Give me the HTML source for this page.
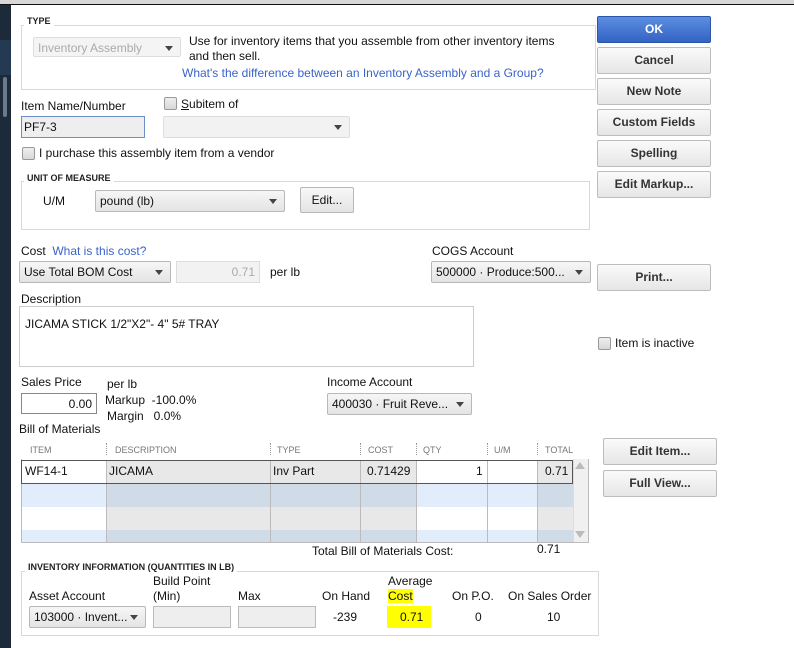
<!DOCTYPE html><html><head><style>
body{margin:0;width:794px;height:648px;background:#fff;position:relative;overflow:hidden;font-family:"Liberation Sans",sans-serif;font-size:12px;color:#111}
.a{position:absolute;white-space:nowrap}
.fs{position:absolute;border:1px solid #d8d8d8}
.lg{position:absolute;background:#fff;font-size:9px;font-weight:bold;padding:0 3px;color:#222}
.btn{position:absolute;left:597px;width:112px;height:25px;border:1px solid #bdbdbd;border-radius:2px;background:linear-gradient(#fafafa,#e6e6e6);font-weight:bold;text-align:center;line-height:25px;color:#333}
.dd{position:absolute;border:1px solid #b8b8b8;border-radius:2px;background:linear-gradient(#f6f6f6,#e4e4e4);line-height:20px;padding-left:4px;box-sizing:border-box;overflow:hidden}
.dd:after{content:"";position:absolute;right:7px;top:8px;border:4px solid transparent;border-top:5px solid #444}
.pb{position:absolute;border:1px solid #b8b8b8;border-radius:2px;background:linear-gradient(#f8f8f8,#e4e4e4);box-sizing:border-box;text-align:center}
.in{position:absolute;border:1px solid #aaa;background:#fff;box-sizing:border-box}
.cb{position:absolute;width:11px;height:11px;border:1px solid #999;border-radius:2px;background:linear-gradient(#eee,#d8d8d8)}
.lk{color:#3a63c8}
.hd{position:absolute;top:445px;font-size:9px;color:#777}
.sep{position:absolute;top:443px;height:12px;border-left:1px dotted #999}
</style></head><body>
<div class="a" style="left:0;top:0;width:794px;height:4px;background:#d8d8d8"></div>
<div class="a" style="left:0;top:4px;width:794px;height:1px;background:#111"></div>
<div class="a" style="left:0;top:5px;width:11px;height:643px;background:#1c2a39"></div>
<div class="a" style="left:0;top:40px;width:11px;height:35px;background:#243a52"></div>
<div class="a" style="left:3px;top:77px;width:4px;height:40px;background:#6b7a8a;border-radius:2px"></div>

<div class="fs" style="left:21px;top:25px;width:573px;height:63px"></div>
<div class="lg" style="left:24px;top:16px">TYPE</div>
<div class="dd" style="left:33px;top:37px;width:148px;height:20px;color:#aaa;border-color:#ddd;background:#f4f4f4">Inventory Assembly</div>
<div class="a" style="left:189px;top:34px">Use for inventory items that you assemble from other inventory items</div>
<div class="a" style="left:189px;top:49px">and then sell.</div>
<div class="a lk" style="left:182px;top:66px">What's the difference between an Inventory Assembly and a Group?</div>

<div class="btn" style="top:16px;background:linear-gradient(#5b8ee0,#3463c4);border-color:#2a55a8;color:#fff">OK</div>
<div class="btn" style="top:47px">Cancel</div>
<div class="btn" style="top:78px">New Note</div>
<div class="btn" style="top:109px">Custom Fields</div>
<div class="btn" style="top:140px">Spellin<u>g</u></div>
<div class="btn" style="top:171px">Edit Markup...</div>
<div class="btn" style="top:264px">Print...</div>
<div class="btn" style="top:438px;left:603px">Edit Item...</div>
<div class="btn" style="top:470px;left:603px">Full View...</div>

<div class="a" style="left:21px;top:99px">Item Name/Number</div>
<div class="in" style="left:21px;top:116px;width:124px;height:22px;border-color:#6b8fc9;background:#eee;padding:3px 2px">PF7-3</div>
<div class="cb" style="left:164px;top:97px"></div>
<div class="a" style="left:181px;top:97px"><u>S</u>ubitem of</div>
<div class="dd" style="left:163px;top:116px;width:187px;height:22px;border-color:#ddd;background:#f2f2f2"></div>
<div class="cb" style="left:22px;top:147px"></div>
<div class="a" style="left:39px;top:146px">I purchase this assembly item from a vendor</div>

<div class="fs" style="left:21px;top:181px;width:567px;height:47px"></div>
<div class="lg" style="left:24px;top:173px">UNIT OF MEASURE</div>
<div class="a" style="left:43px;top:194px">U/M</div>
<div class="dd" style="left:95px;top:190px;width:190px;height:22px">pound (lb)</div>
<div class="pb" style="left:300px;top:187px;width:54px;height:26px;line-height:24px">Edit...</div>

<div class="a" style="left:21px;top:244px">Cost&nbsp; <span class="lk">What is this cost?</span></div>
<div class="dd" style="left:19px;top:261px;width:152px;height:22px">Use Total BOM Cost</div>
<div class="in" style="left:176px;top:261px;width:84px;height:22px;border-color:#ddd;background:#f2f2f2;text-align:right;padding:3px 4px;color:#aaa">0.71</div>
<div class="a" style="left:270px;top:265px">per lb</div>
<div class="a" style="left:432px;top:244px">COGS Account</div>
<div class="dd" style="left:431px;top:261px;width:160px;height:22px">500000 · Produce:500...</div>

<div class="a" style="left:21px;top:292px">Description</div>
<div class="in" style="left:19px;top:306px;width:455px;height:61px;border-color:#ccc;padding:10px 5px">JICAMA STICK 1/2"X2"- 4" 5# TRAY</div>
<div class="cb" style="left:598px;top:337px"></div>
<div class="a" style="left:615px;top:336px">Item is inactive</div>

<div class="a" style="left:21px;top:375px">Sales Price</div>
<div class="in" style="left:21px;top:393px;width:76px;height:21px;border-color:#888;text-align:right;padding:3px 4px">0.00</div>
<div class="a" style="left:107px;top:377px">per lb</div>
<div class="a" style="left:105px;top:393px">Markup&nbsp; -100.0%</div>
<div class="a" style="left:107px;top:409px">Margin&nbsp;&nbsp; 0.0%</div>
<div class="a" style="left:327px;top:375px">Income Account</div>
<div class="dd" style="left:327px;top:393px;width:145px;height:22px">400030 · Fruit Reve...</div>
<div class="a" style="left:19px;top:422px">Bill of Materials</div>

<div class="hd" style="left:30px">ITEM</div><div class="sep" style="left:106px"></div>
<div class="hd" style="left:115px">DESCRIPTION</div><div class="sep" style="left:270px"></div>
<div class="hd" style="left:277px">TYPE</div><div class="sep" style="left:360px"></div>
<div class="hd" style="left:368px">COST</div><div class="sep" style="left:416px"></div>
<div class="hd" style="left:423px">QTY</div><div class="sep" style="left:487px"></div>
<div class="hd" style="left:494px">U/M</div><div class="sep" style="left:537px"></div>
<div class="hd" style="left:545px">TOTAL</div>

<div class="a" style="left:21px;top:459px;width:566px;height:83px;background:#fff;border:1px solid #bbb;border-top:none"></div>
<div class="a" style="left:22px;top:483px;width:551px;height:24px;background:#e2edfb"></div>
<div class="a" style="left:22px;top:530px;width:551px;height:12px;background:#e2edfb"></div>
<div class="a" style="left:106px;top:461px;width:431px;height:81px;background:#e8e8e8"></div>
<div class="a" style="left:106px;top:483px;width:431px;height:24px;background:#d0dbe8"></div>
<div class="a" style="left:106px;top:530px;width:431px;height:12px;background:#d0dbe8"></div>
<div class="a" style="left:416px;top:461px;width:121px;height:81px;background:#fff"></div>
<div class="a" style="left:416px;top:483px;width:121px;height:24px;background:#e2edfb"></div>
<div class="a" style="left:416px;top:530px;width:121px;height:12px;background:#e2edfb"></div>
<div class="a" style="left:537px;top:461px;width:36px;height:81px;background:#e8e8e8"></div>
<div class="a" style="left:537px;top:483px;width:36px;height:24px;background:#d0dbe8"></div>
<div class="a" style="left:537px;top:530px;width:36px;height:12px;background:#d0dbe8"></div>
<div class="a" style="left:106px;top:461px;width:0;height:81px;border-left:1px solid #bbb"></div>
<div class="a" style="left:270px;top:461px;width:0;height:81px;border-left:1px solid #bbb"></div>
<div class="a" style="left:360px;top:461px;width:0;height:81px;border-left:1px solid #bbb"></div>
<div class="a" style="left:416px;top:461px;width:0;height:81px;border-left:1px solid #bbb"></div>
<div class="a" style="left:487px;top:461px;width:0;height:81px;border-left:1px solid #bbb"></div>
<div class="a" style="left:537px;top:461px;width:0;height:81px;border-left:1px solid #bbb"></div>
<div class="a" style="left:573px;top:459px;width:14px;height:83px;background:#f0f0f0;border-left:1px solid #ddd"></div>
<div class="a" style="left:575px;top:462px;border:5px solid transparent;border-bottom:7px solid #bbb;border-top:none"></div>
<div class="a" style="left:575px;top:531px;border:5px solid transparent;border-top:7px solid #bbb;border-bottom:none"></div>
<div class="a" style="left:21px;top:460px;width:550px;height:22px;border:1px solid #555;box-sizing:content-box"></div>
<div class="a" style="left:25px;top:464px">WF14-1</div>
<div class="a" style="left:109px;top:464px">JICAMA</div>
<div class="a" style="left:273px;top:464px">Inv Part</div>
<div class="a" style="left:367px;top:464px">0.71429</div>
<div class="a" style="left:476px;top:464px">1</div>
<div class="a" style="left:545px;top:464px">0.71</div>

<div class="a" style="left:312px;top:544px">Total Bill of Materials Cost:</div>
<div class="a" style="left:537px;top:542px">0.71</div>

<div class="fs" style="left:21px;top:571px;width:576px;height:63px"></div>
<div class="lg" style="left:25px;top:562px">INVENTORY INFORMATION (QUANTITIES IN LB)</div>
<div class="a" style="left:29px;top:589px">Asset Account</div>
<div class="a" style="left:153px;top:574px">Build Point</div>
<div class="a" style="left:153px;top:589px">(Min)</div>
<div class="a" style="left:238px;top:589px">Max</div>
<div class="a" style="left:322px;top:589px">On Hand</div>
<div class="a" style="left:388px;top:574px">Average</div>
<div class="a" style="left:388px;top:589px;background:#ffff00">Cost</div>
<div class="a" style="left:452px;top:589px">On P.O.</div>
<div class="a" style="left:508px;top:589px">On Sales Order</div>
<div class="dd" style="left:29px;top:606px;width:117px;height:22px">103000 · Invent...</div>
<div class="in" style="left:153px;top:606px;width:78px;height:22px;background:#eee;border-color:#bbb"></div>
<div class="in" style="left:238px;top:606px;width:78px;height:22px;background:#eee;border-color:#bbb"></div>
<div class="a" style="left:333px;top:610px">-239</div>
<div class="a" style="left:387px;top:606px;width:44px;height:22px;background:#ffff00"></div>
<div class="a" style="left:400px;top:610px">0.71</div>
<div class="a" style="left:475px;top:610px">0</div>
<div class="a" style="left:547px;top:610px">10</div>
</body></html>
